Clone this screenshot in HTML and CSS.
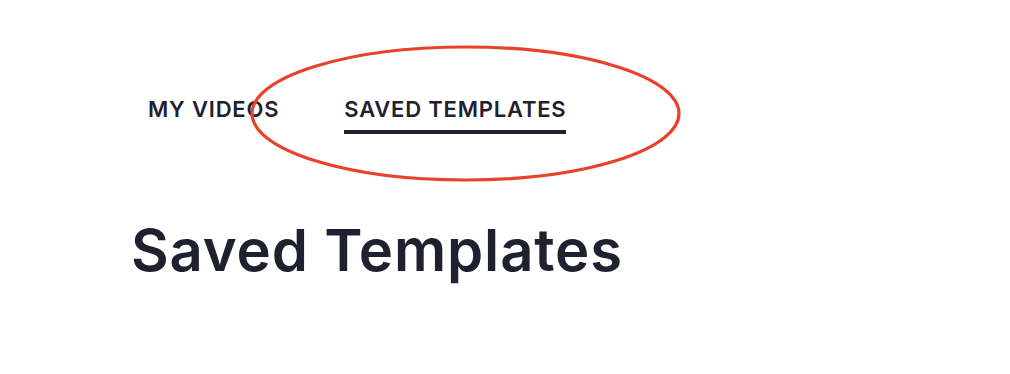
FILE: index.html
```html
<!DOCTYPE html>
<html>
<head>
<meta charset="utf-8">
<link rel="stylesheet" href="styles.css">
</head>
<body>
<div class="page">
  <nav class="tabs">
    <a class="tab">MY VIDEOS</a>
    <a class="tab active">SAVED TEMPLATES</a>
  </nav>
  <h1 class="title">Saved Templates</h1>
  <svg class="annotation" width="1010" height="374" viewBox="0 0 1010 374">
    <ellipse cx="465.5" cy="113.5" rx="213.5" ry="66.5" fill="none" stroke="#e8432a" stroke-width="3.2"/>
  </svg>
</div>
</body>
</html>
```
FILE: styles.css
```css
html, body {
  margin: 0;
  padding: 0;
  background: #ffffff;
}
.page {
  position: relative;
  width: 1010px;
  height: 374px;
  overflow: hidden;
  font-family: "Inter", "Lato", sans-serif;
  color: #1f212e;
}
.tabs {
  display: flex;
  gap: 65px;
  padding: 95px 0 0 148px;
}
.tab {
  font-size: 22px;
  font-weight: 600;
  letter-spacing: 0.8px;
  line-height: 28px;
  padding-bottom: 7px;
  border-bottom: 4px solid transparent;
}
.tab.active {
  border-bottom-color: #1f212e;
}
.title {
  margin: 81px 0 0 131px;
  font-size: 58px;
  font-weight: 600;
  letter-spacing: 0.85px;
  line-height: 70px;
}
.annotation {
  position: absolute;
  left: 0;
  top: 0;
  pointer-events: none;
}
```
